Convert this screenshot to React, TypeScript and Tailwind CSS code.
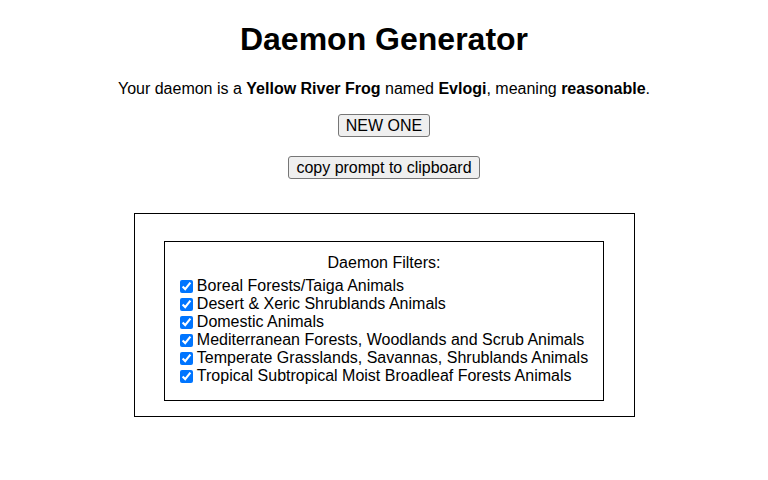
import React, { useState } from 'react';

const FILTERS = [
  'Boreal Forests/Taiga Animals',
  'Desert & Xeric Shrublands Animals',
  'Domestic Animals',
  'Mediterranean Forests, Woodlands and Scrub Animals',
  'Temperate Grasslands, Savannas, Shrublands Animals',
  'Tropical Subtropical Moist Broadleaf Forests Animals',
];

function App() {
  const [checked, setChecked] = useState<boolean[]>(FILTERS.map(() => true));

  const toggle = (i: number) =>
    setChecked(prev => prev.map((v, j) => (j === i ? !v : v)));

  return (
    <div className="min-h-screen bg-white text-black text-[16px] font-['Liberation_Sans',Arial,sans-serif] flex flex-col items-center">
      <h1 className="mt-[21px] text-[32px] leading-[37px] font-bold">Daemon Generator</h1>

      <p className="mt-[22px] leading-[18px]">
        Your daemon is a <b>Yellow River Frog</b> named <b>Evlogi</b>, meaning <b>reasonable</b>.
      </p>

      <button className="mt-[16px] h-[23px] px-[7px] bg-[#efefef] border border-[#767676] rounded-[3px] leading-[18px] hover:bg-[#e5e5e5]">
        NEW ONE
      </button>

      <button className="mt-[19px] h-[23px] px-[7px] bg-[#efefef] border border-[#767676] rounded-[3px] leading-[18px] hover:bg-[#e5e5e5]">
        copy prompt to clipboard
      </button>

      {/* filter panel */}
      <div className="mt-[34px] w-[501px] border border-black pt-[27px] pb-[15px] flex justify-center">
        <div className="border border-black px-[15px] pt-[12px] pb-[15px]">
          <div className="text-center leading-[18px] mb-[5px]">Daemon Filters:</div>
          {FILTERS.map((f, i) => (
            <label key={f} className="flex items-center h-[18px] leading-[18px]">
              <input
                type="checkbox"
                checked={checked[i]}
                onChange={() => toggle(i)}
                className="w-[13px] h-[13px] m-0 mr-[4px]"
              />
              <span>{f}</span>
            </label>
          ))}
        </div>
      </div>
    </div>
  );
}

export default App;
